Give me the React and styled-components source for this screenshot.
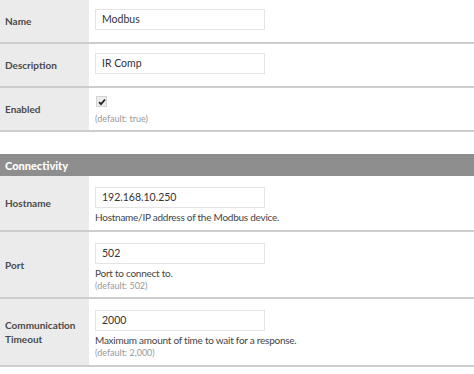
import React from 'react'
import styled, { createGlobalStyle } from 'styled-components'

const GlobalStyle = createGlobalStyle`
  html, body {
    margin: 0;
    padding: 0;
    background: #fff;
  }
  body {
    font-family: Lato, "Open Sans", sans-serif;
    color: #444;
  }
`

const Table = styled.div`
  width: 474px;
  display: flex;
  flex-direction: column;
`

const Row = styled.div`
  display: grid;
  grid-template-columns: 89px 1fr;
  height: ${p => p.h}px;
  border-bottom: 2px solid #cdcdcd;
  box-sizing: border-box;
`

const Label = styled.div`
  background: #ebebeb;
  display: flex;
  align-items: center;
  padding-left: 5px;
  font-size: 10px;
  font-weight: 700;
  line-height: 14px;
  color: #4a4a4a;
`

const Field = styled.div`
  display: flex;
  flex-direction: column;
  padding-left: 6px;
  padding-top: ${p => p.top}px;
`

const Input = styled.div`
  width: 170px;
  height: 21px;
  box-sizing: border-box;
  border: 1px solid #e4e4e4;
  padding-left: 6px;
  font-size: 10.5px;
  line-height: 19px;
  color: #333;
`

const Help = styled.div`
  font-size: 10px;
  line-height: 13px;
  letter-spacing: -0.25px;
  margin-top: 3px;
  color: #444;
`

const Default = styled.div`
  font-size: 9px;
  line-height: 11px;
  color: #999;
  margin-top: ${p => p.gap || 0}px;
`

const Check = styled.div`
  width: 9px;
  height: 9px;
  margin-left: 1px;
  background: #ececec;
  border: 1px solid #d4d4d4;
  display: flex;
  align-items: center;
  justify-content: center;
`

const Spacer = styled.div`
  height: 22px;
`

const Header = styled.div`
  height: 22px;
  background: #8e8e8e;
  color: #fff;
  font-size: 11px;
  font-weight: 900;
  display: flex;
  align-items: center;
  padding-left: 5px;
`

export default function App() {
  return (
    <Table>
      <GlobalStyle />
      <Row h={44}>
        <Label>Name</Label>
        <Field top={9}><Input>Modbus</Input></Field>
      </Row>
      <Row h={44}>
        <Label>Description</Label>
        <Field top={9}><Input>IR Comp</Input></Field>
      </Row>
      <Row h={44}>
        <Label>Enabled</Label>
        <Field top={8}>
          <Check>
            <svg width="8" height="8" viewBox="0 0 8 8">
              <path d="M1 4.2 L3 6.2 L7 1.5" stroke="#222" strokeWidth="1.8" fill="none" />
            </svg>
          </Check>
          <Default gap={6}>(default: true)</Default>
        </Field>
      </Row>
      <Spacer />
      <Header>Connectivity</Header>
      <Row h={56}>
        <Label>Hostname</Label>
        <Field top={11}>
          <Input>192.168.10.250</Input>
          <Help>Hostname/IP address of the Modbus device.</Help>
        </Field>
      </Row>
      <Row h={67}>
        <Label>Port</Label>
        <Field top={11}>
          <Input>502</Input>
          <Help>Port to connect to.</Help>
          <Default>(default: 502)</Default>
        </Field>
      </Row>
      <Row h={68}>
        <Label>Communication<br />Timeout</Label>
        <Field top={11}>
          <Input>2000</Input>
          <Help>Maximum amount of time to wait for a response.</Help>
          <Default>(default: 2,000)</Default>
        </Field>
      </Row>
    </Table>
  )
}
